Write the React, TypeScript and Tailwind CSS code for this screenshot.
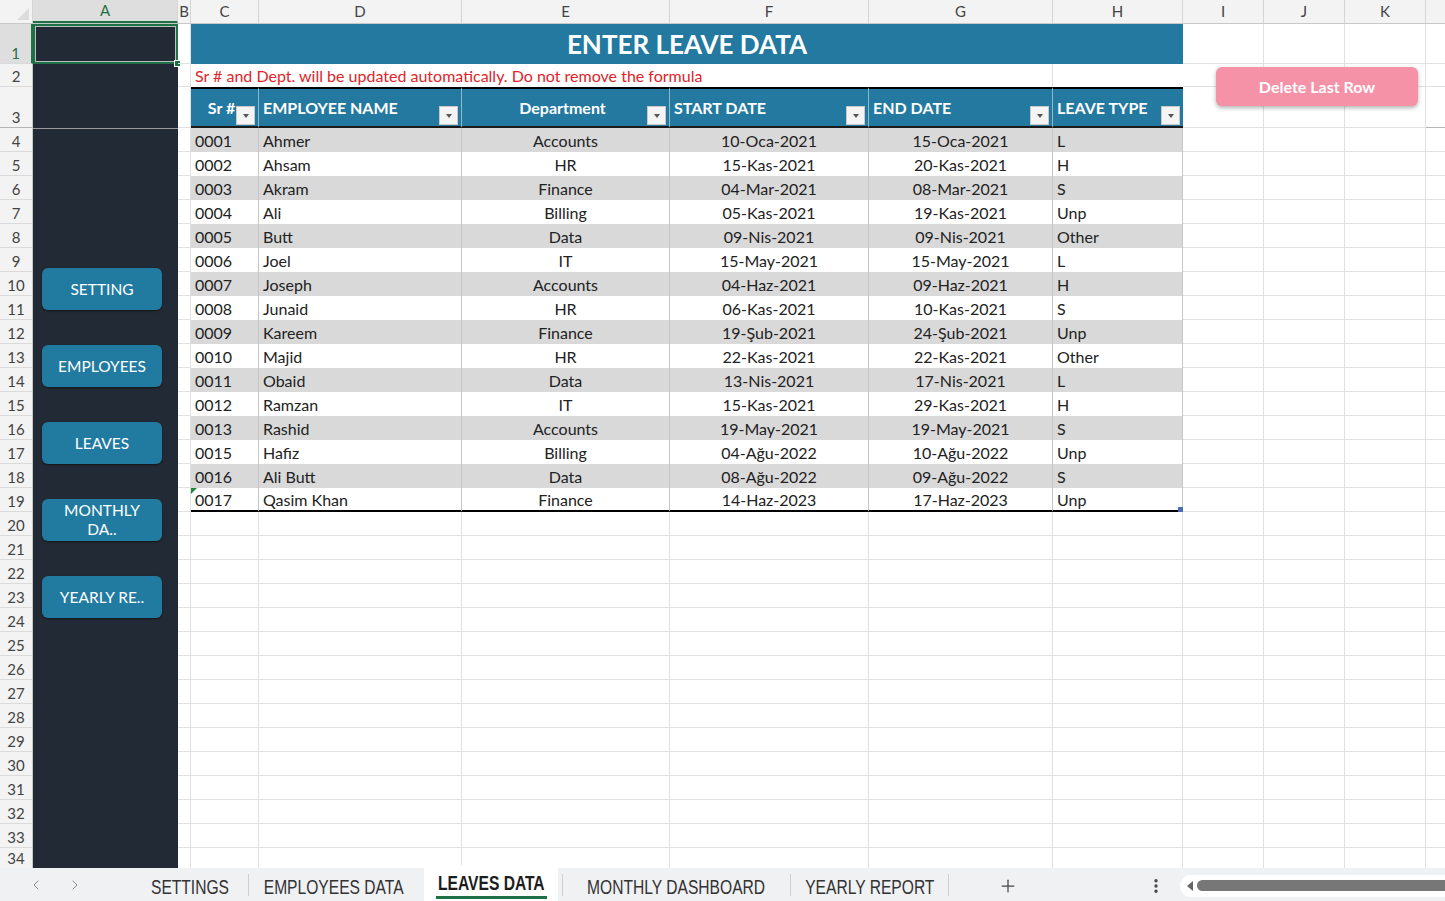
import { ChevronLeft, ChevronRight, Plus, EllipsisVertical } from "lucide-react";

const cols = [
  { key: "B", w: "w-[13px]" },
  { key: "C", w: "w-[68px]" },
  { key: "D", w: "w-[203px]" },
  { key: "E", w: "w-[208px]" },
  { key: "F", w: "w-[199px]" },
  { key: "G", w: "w-[184px]" },
  { key: "H", w: "w-[130px]" },
  { key: "I", w: "w-[81px]" },
  { key: "J", w: "w-[81px]" },
  { key: "K", w: "w-[81px]" },
];

const leaves = [
  ["0001", "Ahmer", "Accounts", "10-Oca-2021", "15-Oca-2021", "L"],
  ["0002", "Ahsam", "HR", "15-Kas-2021", "20-Kas-2021", "H"],
  ["0003", "Akram", "Finance", "04-Mar-2021", "08-Mar-2021", "S"],
  ["0004", "Ali", "Billing", "05-Kas-2021", "19-Kas-2021", "Unp"],
  ["0005", "Butt", "Data", "09-Nis-2021", "09-Nis-2021", "Other"],
  ["0006", "Joel", "IT", "15-May-2021", "15-May-2021", "L"],
  ["0007", "Joseph", "Accounts", "04-Haz-2021", "09-Haz-2021", "H"],
  ["0008", "Junaid", "HR", "06-Kas-2021", "10-Kas-2021", "S"],
  ["0009", "Kareem", "Finance", "19-Şub-2021", "24-Şub-2021", "Unp"],
  ["0010", "Majid", "HR", "22-Kas-2021", "22-Kas-2021", "Other"],
  ["0011", "Obaid", "Data", "13-Nis-2021", "17-Nis-2021", "L"],
  ["0012", "Ramzan", "IT", "15-Kas-2021", "29-Kas-2021", "H"],
  ["0013", "Rashid", "Accounts", "19-May-2021", "19-May-2021", "S"],
  ["0015", "Hafiz", "Billing", "04-Ağu-2022", "10-Ağu-2022", "Unp"],
  ["0016", "Ali Butt", "Data", "08-Ağu-2022", "09-Ağu-2022", "S"],
  ["0017", "Qasim Khan", "Finance", "14-Haz-2023", "17-Haz-2023", "Unp"],
];

const headers = [
  { label: "Sr #", w: "w-[68px]", align: "justify-center" },
  { label: "EMPLOYEE NAME", w: "w-[203px]", align: "justify-start pl-[4px]" },
  { label: "Department", w: "w-[208px]", align: "justify-center" },
  { label: "START DATE", w: "w-[199px]", align: "justify-start pl-[4px]" },
  { label: "END DATE", w: "w-[184px]", align: "justify-start pl-[4px]" },
  { label: "LEAVE TYPE", w: "w-[130px]", align: "justify-start pl-[4px]" },
];

const navButtons = ["SETTING", "EMPLOYEES", "LEAVES", "MONTHLY DA..", "YEARLY RE.."];

function EmptyCell({ w }: { w: string }) {
  return <div className={`${w} h-full shrink-0 border-r border-b border-[#e1e1e1]`} />;
}

function RightEmpties() {
  return (
    <>
      <EmptyCell w="w-[81px]" />
      <EmptyCell w="w-[81px]" />
      <EmptyCell w="w-[81px]" />
      <div className="flex-1 h-full border-b border-[#e1e1e1]" />
    </>
  );
}

function FilterButton() {
  return (
    <div className="absolute right-[3px] bottom-[1px] w-[19px] h-[19px] bg-[#f4f4f4] border border-[#c9c9c9] flex items-center justify-center">
      <div className="w-0 h-0 border-l-[3.5px] border-r-[3.5px] border-t-[4px] border-l-transparent border-r-transparent border-t-[#555]" />
    </div>
  );
}

function TabSep() {
  return <div className="w-px h-[22px] self-center shrink-0 bg-[#cfcfcf]" />;
}

function Tab({ label, w, active }: { label: string; w: string; active?: boolean }) {
  return (
    <div
      className={`${w} shrink-0 flex justify-center relative ${
        active ? "bg-white text-[#1d1d1d] font-bold h-[36px] -mt-[3px] items-center" : "items-center pt-[4px]"
      }`}
    >
      <span className="inline-block scale-x-[0.78] whitespace-nowrap">{label}</span>
      {active && <div className="absolute left-[12px] right-[11px] bottom-[2px] h-[3px] bg-[#1e7145]" />}
    </div>
  );
}

export default function App() {
  const rowNums = Array.from({ length: 34 }, (_, i) => i + 1);
  const rowHeight = (n: number) =>
    n === 1 ? "h-[40px]" : n === 2 ? "h-[23px]" : n === 3 ? "h-[41px]" : n === 34 ? "h-[20px]" : "h-[24px]";

  return (
    <div className="w-[1445px] h-[901px] flex flex-col overflow-hidden bg-white font-['Lato','Open_Sans',sans-serif] text-[#222]">
      {/* column letters */}
      <div className="h-[24px] shrink-0 flex bg-[#f3f3f3] border-b border-[#c8c8c8] text-[15px] text-[#444]">
        <div className="w-[33px] h-full shrink-0 border-r border-[#d4d4d4] relative">
          <div className="absolute right-[3px] bottom-[3px] w-0 h-0 border-l-[12px] border-l-transparent [border-bottom:12px_solid_#dcdcdc]" />
        </div>
        <div className="w-[145px] h-full shrink-0 flex items-center justify-center bg-[#dedede] text-[#1e7145] border-r border-[#d4d4d4] border-b-2 border-b-[#1e7145]">
          A
        </div>
        {cols.map((c) => (
          <div key={c.key} className={`${c.w} h-full shrink-0 flex items-center justify-center border-r border-[#d4d4d4]`}>
            {c.key}
          </div>
        ))}
        <div className="flex-1 h-full" />
      </div>

      <div className="flex-1 min-h-0 flex overflow-hidden">
        {/* row numbers */}
        <div className="w-[33px] shrink-0 flex flex-col bg-[#f3f3f3] border-r border-[#c8c8c8] text-[15px] text-[#444]">
          {rowNums.map((n) => (
            <div
              key={n}
              className={`${rowHeight(n)} shrink-0 flex items-end justify-center leading-none ${n === 34 ? "" : "border-b"} ${
                n === 1 ? "bg-[#dedede] text-[#1e7145] border-r-2 border-r-[#1e7145] -mr-px" : ""
              } ${n === 3 ? "border-[#b5b5b5]" : "border-[#dadada]"}`}
            >
              <span className="pb-[2px]">{n}</span>
            </div>
          ))}
        </div>

        {/* column A: navigation panel */}
        <div className="w-[145px] shrink-0 flex flex-col bg-[#222a35]">
          <div className="h-[40px] shrink-0 border-2 border-[#1e7145] relative">
            <div className="absolute inset-0 border border-white/70" />
            <div className="absolute -right-[5px] -bottom-[5px] w-[7px] h-[7px] bg-[#1e7145] border border-white" />
          </div>
          <div className="h-[65px] shrink-0 border-b border-[#9a9a9a]" />
          <div className="flex flex-col gap-[35px] pt-[139px] pl-[9px]">
            {navButtons.map((b) => (
              <div
                key={b}
                className="w-[120px] h-[42px] rounded-[6px] bg-[#217aa0] text-white text-[15.5px] leading-[19px] text-center flex items-center justify-center px-3 shadow-[0_1px_2px_rgba(0,0,0,0.5)]"
              >
                {b}
              </div>
            ))}
          </div>
        </div>

        {/* grid cells */}
        <div className="flex-1 flex flex-col relative text-[16px]">
          {/* row 1 */}
          <div className="h-[40px] shrink-0 flex">
            <EmptyCell w="w-[13px]" />
            <div className="w-[992px] h-full shrink-0 bg-[#23799f] text-white font-bold text-[26px] flex items-center justify-center">
              ENTER LEAVE DATA
            </div>
            <RightEmpties />
          </div>
          {/* row 2 */}
          <div className="h-[23px] shrink-0 flex">
            <EmptyCell w="w-[13px]" />
            <div className="w-[678px] h-full shrink-0 bg-white text-[#e0242a] text-[16px] pl-[4px] flex items-center whitespace-nowrap">
              Sr # and Dept. will be updated automatically. Do not remove the formula
            </div>
            <div className="w-[184px] h-full shrink-0 border-r border-[#e1e1e1]" />
            <div className="w-[130px] h-full shrink-0" />
            <RightEmpties />
          </div>
          {/* row 3 header */}
          <div className="h-[41px] shrink-0 flex">
            <EmptyCell w="w-[13px]" />
            {headers.map((h, i) => (
              <div
                key={h.label}
                className={`${h.w} h-full shrink-0 relative bg-[#23799f] text-white font-bold text-[16px] flex items-center ${h.align} border-t-2 border-t-black border-b-2 border-b-[#1a1a1a] ${
                  i < headers.length - 1 ? "border-r border-r-[#8fb8cb]" : ""
                }`}
              >
                <span className="pr-[6px] whitespace-nowrap">{h.label}</span>
                <FilterButton />
              </div>
            ))}
            <EmptyCell w="w-[81px]" />
            <EmptyCell w="w-[81px]" />
            <EmptyCell w="w-[81px]" />
            <div className="flex-1 h-full border-b border-[#b5b5b5]" />
          </div>
          {/* data rows */}
          {leaves.map((r, i) => {
            const last = i === leaves.length - 1;
            const bg = i % 2 === 0 ? "bg-[#d9d9d9]" : "bg-white";
            const cell = `h-full shrink-0 flex items-center pt-px border-r border-[#c6c6c6] ${bg} ${
              last ? "border-b-2 border-b-black" : ""
            }`;
            return (
              <div key={r[0]} className="h-[24px] shrink-0 flex">
                <EmptyCell w="w-[13px]" />
                <div className={`w-[68px] ${cell} pl-[4px] relative`}>
                  {last && (
                    <div className="absolute left-0 top-0 w-0 h-0 border-t-[6px] border-r-[6px] border-t-[#1f8a3c] border-r-transparent" />
                  )}
                  {r[0]}
                </div>
                <div className={`w-[203px] ${cell} pl-[4px]`}>{r[1]}</div>
                <div className={`w-[208px] ${cell} justify-center`}>{r[2]}</div>
                <div className={`w-[199px] ${cell} justify-center`}>{r[3]}</div>
                <div className={`w-[184px] ${cell} justify-center`}>{r[4]}</div>
                <div className={`w-[130px] ${cell} pl-[4px] relative`}>
                  {r[5]}
                  {last && <div className="absolute -right-px -bottom-[2px] w-[5px] h-[5px] bg-[#4a6fb5]" />}
                </div>
                <RightEmpties />
              </div>
            );
          })}
          {/* empty rows */}
          {Array.from({ length: 15 }, (_, i) => (
            <div key={i} className="h-[24px] shrink-0 flex">
              {cols.map((c) => (
                <EmptyCell key={c.key} w={c.w} />
              ))}
              <div className="flex-1 h-full border-b border-[#e1e1e1]" />
            </div>
          ))}

          <div className="absolute left-[1038px] top-[43px] w-[202px] h-[39px] rounded-[6px] bg-[#f592a8] text-white font-bold text-[16px] flex items-center justify-center shadow-[0_2px_4px_rgba(0,0,0,0.3)]">
            Delete Last Row
          </div>
        </div>
      </div>

      {/* sheet tabs */}
      <div className="h-[33px] shrink-0 flex items-stretch bg-[#f0f1f3] text-[20px] text-[#333] font-['Liberation_Sans',sans-serif]">
        <div className="w-[132px] shrink-0 flex items-center pl-[28px] gap-[23px] text-[#8a8a8a]">
          <ChevronLeft size={16} strokeWidth={1.5} />
          <ChevronRight size={16} strokeWidth={1.5} />
        </div>
        <Tab label="SETTINGS" w="w-[116px]" />
        <TabSep />
        <Tab label="EMPLOYEES DATA" w="w-[169px]" />
        <div className="w-[6px] shrink-0" />
        <Tab label="LEAVES DATA" w="w-[134px]" active />
        <div className="w-[4px] shrink-0" />
        <TabSep />
        <Tab label="MONTHLY DASHBOARD" w="w-[227px]" />
        <TabSep />
        <Tab label="YEARLY REPORT" w="w-[157px]" />
        <TabSep />
        <div className="w-[118px] shrink-0 flex items-center justify-center pt-[2px] text-[#444]">
          <Plus size={20} strokeWidth={1.5} />
        </div>
        <div className="flex-1 flex items-center justify-end pr-[15px] pt-[2px] text-[#444]">
          <EllipsisVertical size={18} strokeWidth={2.5} />
        </div>
        <div className="w-[265px] shrink-0 flex items-center pt-[2px]">
          <div className="w-full h-[22px] rounded-l-full bg-white flex items-center pl-[7px] gap-[4px]">
            <div className="w-0 h-0 border-t-[5px] border-b-[5px] border-r-[6px] border-t-transparent border-b-transparent border-r-[#666]" />
            <div className="flex-1 h-[11px] rounded-l-full bg-[#777]" />
          </div>
        </div>
      </div>
    </div>
  );
}
